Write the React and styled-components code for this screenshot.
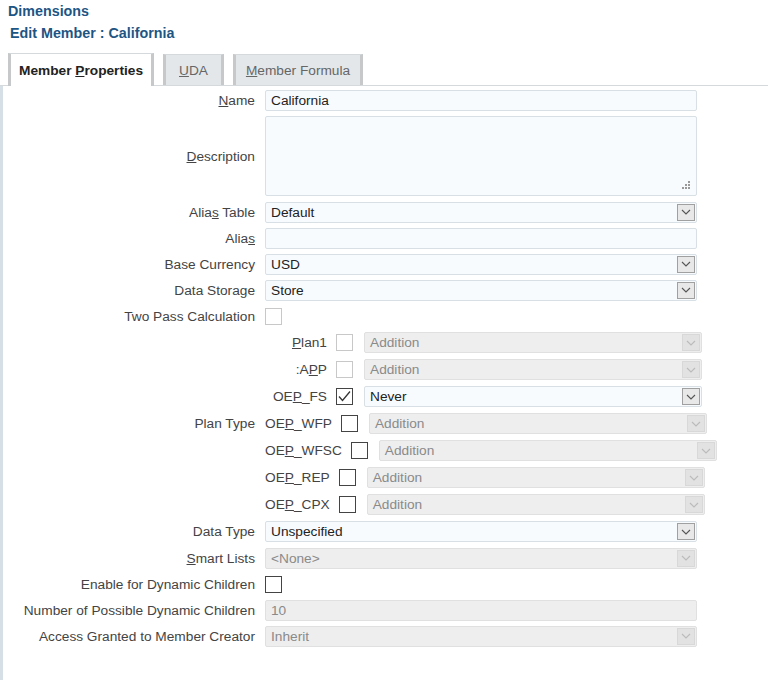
import React from "react";
import styled, { createGlobalStyle } from "styled-components";

const Global = createGlobalStyle`
  body { margin: 0; background: #fff; font-family: "Liberation Sans", Arial, sans-serif; font-size: 13.7px; color: #333; }
`;

const Page = styled.div`width: 768px; height: 680px; overflow: hidden; position: relative;`;
const Header = styled.div`padding: 3px 8px 0 8px; color: #1d5584; font-weight: bold; font-size: 14.3px;`;
const Title = styled.div`margin-top: ${p => p.$mt || 0}px; padding-left: ${p => p.$pl || 0}px;`;
const TabBar = styled.div`display: flex; align-items: flex-end; margin-top: 11px; padding-left: 8px; height: 33px; border-bottom: 1px solid #d5d9dc;`;
const Tab = styled.div`
  height: ${p => (p.$active ? 33 : 31)}px; box-sizing: border-box; padding: 0 ${p => p.$pad}px;
  display: flex; align-items: center; margin-right: 9px;
  background: ${p => (p.$active ? "#fff" : "#e3e7ea")};
  border-left: 3px solid #c6c8ca; border-right: 3px solid #c6c8ca;
  border-top: 1px solid #d6d9dc;
  font-weight: ${p => (p.$active ? "bold" : "normal")};
  color: ${p => (p.$active ? "#222" : "#666")};
  margin-bottom: ${p => (p.$active ? -1 : 0)}px;
  u { text-decoration: underline; }
`;
const Body = styled.div`border-left: 3px solid #d6dee6; height: 600px; padding-top: 1px;`;
const Row = styled.div`display: flex; align-items: center; min-height: ${p => p.$h || 26}px;`;
const Label = styled.div`width: 252px; text-align: right; padding-right: 10px; color: #444; flex-shrink: 0; white-space: nowrap;`;
const Field = styled.div`
  height: ${p => p.$h || 21}px; box-sizing: border-box;
  border: 1px solid ${p => (p.$disabled ? "#e0e0e0" : "#d8e0e6")};
  background: ${p => (p.$disabled ? "#eeeeee" : "#f8fbfe")};
  color: ${p => (p.$disabled ? "#8a8a8a" : "#222")};
  border-radius: 2px; display: flex; align-items: center; padding-left: 5px; position: relative;
  width: ${p => p.$w || 432}px;
`;
const Caret = styled.div`
  position: absolute; right: 1px; top: 1px; bottom: 1px; width: 18px;
  background: ${p => (p.$disabled ? "#e2e2e2" : "#e8e8e8")};
  border: 1px solid ${p => (p.$disabled ? "#d8d8d8" : "#a0a0a0")}; box-sizing: border-box;
  display: flex; align-items: center; justify-content: center;
`;
const Grip = styled.svg`position: absolute; right: 5px; bottom: 5px;`;
const Check = styled.div`
  width: 15px; height: 15px; border: 1px solid ${p => (p.$light ? "#c8c8c8" : "#444")}; background: #fff;
  margin-right: ${p => p.$mr || 0}px; flex-shrink: 0; display: flex; align-items: center; justify-content: center;
`;
const SubLabel = styled.div`min-width: 62px; text-align: right; margin-right: 9px; color: #444; white-space: nowrap;`;

const ChevronIcon = ({ disabled }) => (
  <svg width="10" height="6" viewBox="0 0 10 6"><path d="M1 1l4 4 4-4" fill="none" stroke={disabled ? "#bbb" : "#555"} strokeWidth="1.1" /></svg>
);

const Select = ({ value, disabled, w }) => (
  <Field $disabled={disabled} $w={w}>
    {value}
    <Caret $disabled={disabled}><ChevronIcon disabled={disabled} /></Caret>
  </Field>
);

const CheckMark = () => (
  <svg width="13" height="11" viewBox="0 0 13 11"><path d="M1 5.5l3.5 4 7.5-9" fill="none" stroke="#333" strokeWidth="1.3" /></svg>
);

const plans = [
  { sub: <><u>P</u>lan1</>, light: true, val: "Addition", dis: true },
  { sub: <>:A<u>P</u>P</>, light: true, val: "Addition", dis: true },
  { sub: <>OE<u>P</u>_FS</>, checked: true, val: "Never" },
  { sub: <>OE<u>P</u>_WFP</>, val: "Addition", dis: true, label: "Plan Type" },
  { sub: <>OE<u>P</u>_WFSC</>, val: "Addition", dis: true },
  { sub: <>OE<u>P</u>_REP</>, val: "Addition", dis: true },
  { sub: <>OE<u>P</u>_CPX</>, val: "Addition", dis: true },
];

export default function App() {
  return (
    <Page>
      <Global />
      <Header>
        <Title>Dimensions</Title>
        <Title $mt={6} $pl={2}>Edit Member : California</Title>
      </Header>
      <TabBar>
        <Tab $active $pad={8}>Member&nbsp;<u>P</u>roperties</Tab>
        <Tab $pad={13}><u>U</u>DA</Tab>
        <Tab $pad={10}><u>M</u>ember Formula</Tab>
      </TabBar>
      <Body>
        <Row><Label><u>N</u>ame</Label><Field>California</Field></Row>
        <Row $h={86}><Label><u>D</u>escription</Label>
          <Field $h={80}>
            <Grip width="10" height="10" viewBox="0 0 10 10" fill="#999">
              <rect x="7" y="1" width="2" height="2"/><rect x="4" y="4" width="2" height="2"/><rect x="7" y="4" width="2" height="2"/>
              <rect x="1" y="7" width="2" height="2"/><rect x="4" y="7" width="2" height="2"/><rect x="7" y="7" width="2" height="2"/>
            </Grip>
          </Field>
        </Row>
        <Row><Label>Alia<u>s</u> Table</Label><Select value="Default" /></Row>
        <Row><Label>Alia<u>s</u></Label><Field /></Row>
        <Row><Label>Base Currency</Label><Select value="USD" /></Row>
        <Row><Label>Data Storage</Label><Select value="Store" /></Row>
        <Row><Label>Two Pass Calculation</Label><Check $light /></Row>
        {plans.map((p, i) => (
          <Row key={i} $h={27}>
            <Label>{p.label || ""}</Label>
            <SubLabel>{p.sub}</SubLabel>
            <Check $light={p.light} $mr={11}>{p.checked && <CheckMark />}</Check>
            <Select value={p.val} disabled={p.dis} w={338} />
          </Row>
        ))}
        <Row $h={27}><Label>Data Type</Label><Select value="Unspecified" /></Row>
        <Row><Label><u>S</u>mart Lists</Label><Select value="<None>" disabled /></Row>
        <Row><Label>Enable for Dynamic Children</Label><Check /></Row>
        <Row><Label>Number of Possible Dynamic Children</Label><Field $disabled>10</Field></Row>
        <Row><Label>Access Granted to Member Creator</Label><Select value="Inherit" disabled /></Row>
      </Body>
    </Page>
  );
}
